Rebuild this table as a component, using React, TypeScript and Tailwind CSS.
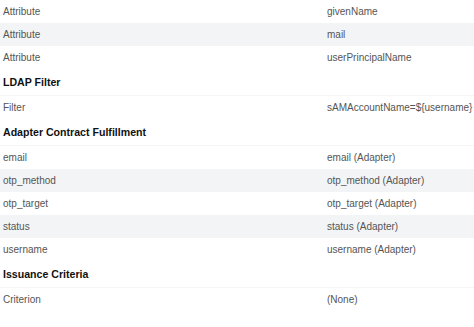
import React from 'react';

type Row = [string, string];

const sections: { title?: string; rows: Row[] }[] = [
  {
    rows: [
      ['Attribute', 'givenName'],
      ['Attribute', 'mail'],
      ['Attribute', 'userPrincipalName'],
    ],
  },
  { title: 'LDAP Filter', rows: [['Filter', 'sAMAccountName=${username}']] },
  {
    title: 'Adapter Contract Fulfillment',
    rows: [
      ['email', 'email (Adapter)'],
      ['otp_method', 'otp_method (Adapter)'],
      ['otp_target', 'otp_target (Adapter)'],
      ['status', 'status (Adapter)'],
      ['username', 'username (Adapter)'],
    ],
  },
  { title: 'Issuance Criteria', rows: [['Criterion', '(None)']] },
];

const Table = ({ rows }: { rows: Row[] }) => (
  <div className="flex flex-col">
    {rows.map(([k, v], i) => (
      <div
        key={i}
        className={`grid grid-cols-[324px_1fr] h-[23px] items-center px-[3px] text-[10px] text-[#555] ${i % 2 === 1 ? 'bg-[#f3f4f6]' : ''}`}
      >
        <span>{k}</span>
        <span>{v}</span>
      </div>
    ))}
  </div>
);

export default function App() {
  return (
    <div className="w-[474px] h-[327px] overflow-hidden bg-white font-['Liberation_Sans',Arial,sans-serif]">
      {sections.map((s, i) => (
        <div key={i}>
          {s.title && (
            <h3 className="h-[27px] flex items-center px-[3px] pt-px text-[10.6px] font-bold text-[#111] border-b border-[#f5f5f5]">
              {s.title}
            </h3>
          )}
          <Table rows={s.rows} />
        </div>
      ))}
    </div>
  );
}
